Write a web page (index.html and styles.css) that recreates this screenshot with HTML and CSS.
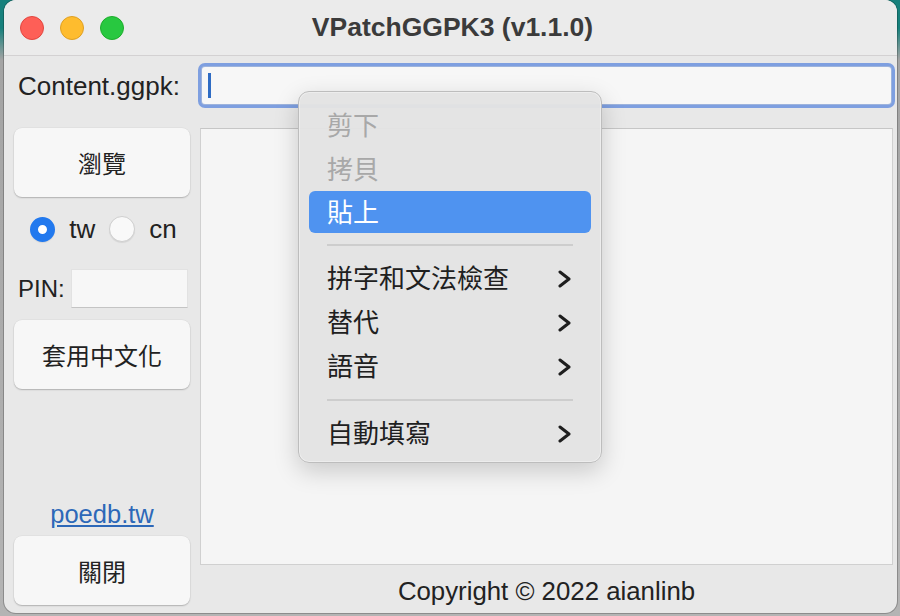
FILE: index.html
```html
<!DOCTYPE html>
<html lang="zh-Hant">
<head>
    <meta charset="UTF-8">
    <title>VPatchGGPK3 (v1.1.0)</title>
    <link rel="stylesheet" href="styles.css">
</head>
<body>

    <div class="window">
        <div class="titlebar">
            <div class="lights">
                <span class="light red"></span>
                <span class="light yellow"></span>
                <span class="light green"></span>
            </div>
            <div class="title">VPatchGGPK3 (v1.1.0)</div>
            <div></div>
        </div>

        <div class="path-row">
            <span class="path-label">Content.ggpk:</span>
            <div class="path-input"><span class="caret"></span></div>
        </div>

        <div class="main">
            <div class="side">
                <div class="btn">瀏覽</div>

                <div class="radios">
                    <span class="radio checked"></span>
                    <span class="radio-text">tw</span>
                    <span class="radio"></span>
                    <span class="radio-text">cn</span>
                </div>

                <div class="pin-row">
                    <span class="pin-label">PIN:</span>
                    <div class="pin-input"></div>
                </div>

                <div class="btn apply">套用中文化</div>

                <div class="spacer"></div>

                <a class="link" href="#">poedb.tw</a>
                <div class="btn">關閉</div>
            </div>

            <div class="output-col">
                <div class="output"></div>
                <div class="copyright">Copyright © 2022 aianlinb</div>
            </div>
        </div>

        <!-- right-click menu over the text field -->
        <div class="menu">
            <div class="menu-item disabled">剪下</div>
            <div class="menu-item disabled">拷貝</div>
            <div class="menu-item active">貼上</div>
            <div class="menu-sep"></div>
            <div class="menu-item">拼字和文法檢查
                <svg class="chev" width="15" height="18" viewBox="0 0 15 18"><polyline points="3,2 12,9 3,16"/></svg>
            </div>
            <div class="menu-item">替代
                <svg class="chev" width="15" height="18" viewBox="0 0 15 18"><polyline points="3,2 12,9 3,16"/></svg>
            </div>
            <div class="menu-item">語音
                <svg class="chev" width="15" height="18" viewBox="0 0 15 18"><polyline points="3,2 12,9 3,16"/></svg>
            </div>
            <div class="menu-sep"></div>
            <div class="menu-item">自動填寫
                <svg class="chev" width="15" height="18" viewBox="0 0 15 18"><polyline points="3,2 12,9 3,16"/></svg>
            </div>
        </div>
    </div>

</body>
</html>
```

FILE: styles.css
```css
body {
    margin: 0;
    width: 900px;
    height: 616px;
    overflow: hidden;
    font-family: "Liberation Sans", "Noto Sans CJK TC", sans-serif;
    color: #222;
    background: linear-gradient(to bottom, #17807c 0, #17807c 28px, #a4a4a4 60px, #b4b4b4 100%);
}

.window {
    position: relative;
    margin-left: 4px;
    width: 893px;
    height: 613px;
    border-radius: 12px;
    overflow: hidden;
    background-color: #e8e8e8;
    box-shadow: 0 0 0 1px rgba(0, 0, 0, 0.22);
}

/* title bar */
.titlebar {
    display: grid;
    grid-template-columns: 1fr auto 1fr;
    align-items: center;
    height: 55px;
    border-bottom: 1px solid #d3d1d2;
    background-color: #ebebeb;
}
.lights {
    display: flex;
    gap: 16px;
    padding-left: 16px;
}
.light {
    width: 24px;
    height: 24px;
    border-radius: 50%;
    box-sizing: border-box;
}
.red { background-color: #fe5f57; border: 1px solid #e2463f; }
.yellow { background-color: #febc2e; border: 1px solid #dfa023; }
.green { background-color: #28c840; border: 1px solid #1dad2b; }
.title {
    font-size: 26.5px;
    font-weight: bold;
    color: #3b3b3b;
    padding-left: 4px;
}

/* file path row */
.path-row {
    display: flex;
    align-items: center;
    padding: 11px 6px 24px 14px;
}
.path-label {
    font-size: 26px;
    line-height: 30px;
}
.path-input {
    flex: 1;
    height: 37px;
    margin-left: 22px;
    display: flex;
    align-items: center;
    background-color: #f7f7f7;
    border-radius: 3px;
    box-shadow: 0 0 0 1px #9db3dc, 0 0 0 4px #7e9fe0;
}
.caret {
    width: 3px;
    height: 25px;
    margin-left: 6px;
    background-color: #2f6cc4;
}

/* main area */
.main {
    display: flex;
    gap: 10px;
    height: 477px;
    padding: 0 4px 8px 10px;
}
.side {
    width: 176px;
    display: flex;
    flex-direction: column;
}
.btn {
    height: 69px;
    display: flex;
    align-items: center;
    justify-content: center;
    border-radius: 8px;
    background-color: #f7f7f7;
    box-shadow: 0 1px 1.5px rgba(0, 0, 0, 0.22), 0 0 0 0.5px rgba(0, 0, 0, 0.05);
    font-size: 24px;
    color: #222;
}
.apply {
    margin-top: 12px;
}

.radios {
    display: flex;
    align-items: center;
    justify-content: center;
    height: 26px;
    margin: 19px 0 27px 3px;
    font-size: 26px;
}
.radio {
    width: 26px;
    height: 26px;
    border-radius: 50%;
    box-sizing: border-box;
    background-color: #f9f9f9;
    border: 1px solid #cfcfcf;
    box-shadow: 0 1px 1px rgba(0, 0, 0, 0.08);
    margin-left: 14px;
}
.radio.checked {
    width: 25px;
    height: 25px;
    margin-left: 0;
    border: 8px solid #2279ee;
    background-color: #fff;
}
.radio-text {
    margin-left: 14px;
    line-height: 30px;
}

.pin-row {
    display: flex;
    align-items: center;
    height: 39px;
}
.pin-label {
    margin-left: 4px;
    font-size: 24px;
}
.pin-input {
    width: 117px;
    height: 39px;
    margin-left: auto;
    margin-right: 2px;
    box-sizing: border-box;
    background-color: #f7f7f7;
    border: 1px solid #e2e2e2;
    border-bottom-color: #c4c4c4;
}

.spacer {
    flex: 1;
}
.link {
    display: block;
    text-align: center;
    font-size: 25.5px;
    line-height: 30px;
    margin-bottom: 7px;
    color: #2d68b8;
}

.output-col {
    flex: 1;
    display: flex;
    flex-direction: column;
}
.output {
    flex: 1;
    background-color: #f5f5f5;
    border: 1px solid #d0d0d0;
    border-top-color: #c6c6c6;
}
.copyright {
    height: 40px;
    box-sizing: border-box;
    padding-top: 12px;
    line-height: 28px;
    text-align: center;
    font-size: 25.8px;
    color: #222;
}

/* context menu */
.menu {
    position: absolute;
    left: 294px;
    top: 91px;
    width: 304px;
    height: 372px;
    box-sizing: border-box;
    padding: 11px 10px 8px;
    border-radius: 11px;
    background-color: rgba(227, 227, 227, 0.97);
    border: 1px solid #bdbdbd;
    box-shadow: 0 8px 24px rgba(0, 0, 0, 0.18), inset 0 0 0 1px rgba(255, 255, 255, 0.35);
}
.menu-item {
    display: flex;
    align-items: center;
    justify-content: space-between;
    height: 44px;
    box-sizing: border-box;
    padding: 2px 19px 0 18px;
    border-radius: 6px;
    font-size: 26px;
    line-height: 1;
    color: #202020;
}
.menu-item.disabled {
    color: #a8a8a8;
}
.menu-item.active {
    height: 42px;
    margin-bottom: 2px;
    background-color: #4f93f0;
    color: #fff;
}
.menu-sep {
    height: 2px;
    margin: 11px 18px 10px;
    background-color: #cdcdcd;
}
.chev polyline {
    fill: none;
    stroke: #1e1e1e;
    stroke-width: 3;
    stroke-linecap: round;
    stroke-linejoin: round;
}
```
